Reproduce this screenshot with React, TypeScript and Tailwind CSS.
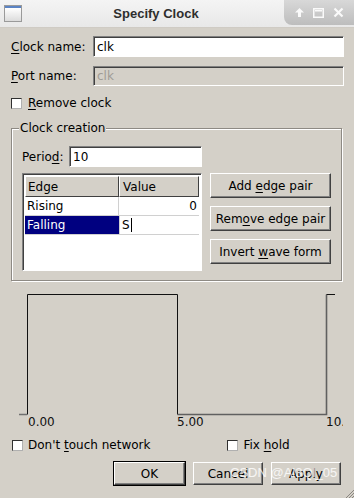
const raised =
  "border border-t-white border-l-white border-r-[#404040] border-b-[#404040] shadow-[inset_-1px_-1px_0_#808080]";
const sunken =
  "border border-t-[#808080] border-l-[#808080] border-r-white border-b-white shadow-[inset_1px_1px_0_#404040]";

function CheckBox() {
  return (
    <span className="inline-block w-[11px] h-[11px] bg-white border border-t-[#303030] border-l-[#303030] border-r-[#b0b0b0] border-b-[#b0b0b0]" />
  );
}

function Btn({
  children,
  w,
  def,
}: {
  children: React.ReactNode;
  w: string;
  def?: boolean;
}) {
  if (def) {
    return (
      <div className={`${w} h-[25px] border border-black flex`}>
        <button className={`flex-1 ${raised} bg-[#d4d0c8] text-[12px]`}>{children}</button>
      </div>
    );
  }
  return (
    <button className={`${w} h-[23px] ${raised} bg-[#d4d0c8] text-[12px] leading-none`}>
      {children}
    </button>
  );
}

export default function App() {
  return (
    <div className="relative w-[354px] h-[498px] overflow-hidden bg-[#d4d0c8] text-[12px] text-black font-['DejaVu_Sans',sans-serif]">
      {/* title bar */}
      <div className="flex h-[28px] bg-gradient-to-b from-[#f4f4f4] to-[#e8e8e8] border-b border-[#cfcbc4]">
        <div className="w-[28px] flex items-center pl-[4px]">
          <svg width="18" height="17" viewBox="0 0 18 17">
            <defs>
              <linearGradient id="g" x1="0" y1="0" x2="0" y2="1">
                <stop offset="0" stopColor="#ffffff" />
                <stop offset="1" stopColor="#dcdcdc" />
              </linearGradient>
            </defs>
            <rect x="0.5" y="0.5" width="17" height="16" fill="#f2f2f2" stroke="#9a9a9a" />
            <rect x="1" y="1" width="16" height="2" fill="#5b84c4" />
            <rect x="1" y="3" width="16" height="13" fill="url(#g)" />
          </svg>
        </div>
        <div className="flex-1 flex items-center justify-center font-['Liberation_Sans',sans-serif] font-bold text-[13px] text-[#2e2e2e]">
          Specify Clock
        </div>
        <div className="w-[70px] h-[25px] rounded-bl-[8px] bg-gradient-to-b from-[#d8d8d8] to-[#bdbdbd] flex items-center justify-around px-[6px]">
          <svg width="11" height="11" viewBox="0 0 11 11">
            <path d="M5.5 1 L10 5.5 H7 V10 H4 V5.5 H1 Z" fill="#fafafa" />
          </svg>
          <svg width="11" height="10" viewBox="0 0 11 10">
            <rect x="0.75" y="0.75" width="9.5" height="8.5" fill="none" stroke="#fafafa" strokeWidth="1.5" />
            <rect x="2" y="2" width="7" height="1.5" fill="#fafafa" />
          </svg>
          <svg width="11" height="11" viewBox="0 0 11 11">
            <path d="M1.5 1.5 L9.5 9.5 M9.5 1.5 L1.5 9.5" stroke="#fafafa" strokeWidth="2.2" />
          </svg>
        </div>
      </div>

      {/* name rows */}
      <div className="pl-[11px] pr-[10px]">
        <div className="mt-[8px] flex items-center h-[21px]">
          <span className="w-[82px]">
            <u className="underline-offset-2">C</u>lock name:
          </span>
          <div className={`flex-1 h-[21px] bg-white ${sunken} flex items-center pl-[3px]`}>clk</div>
        </div>
        <div className="mt-[9px] flex items-center h-[20px]">
          <span className="w-[82px]">
            <u className="underline-offset-2">P</u>ort name:
          </span>
          <div className={`flex-1 h-[20px] ${sunken} flex items-center pl-[3px] text-[#a09c96]`}>clk</div>
        </div>
        <div className="mt-[11px] flex items-center h-[12px] gap-[6px]">
          <CheckBox />
          <span>
            <u className="underline-offset-2">R</u>emove clock
          </span>
        </div>

        {/* group box */}
        <div className="relative mt-[19px] w-[331px] h-[153px] border border-[#8e8a84] shadow-[inset_1px_1px_0_#ffffff,1px_1px_0_#ffffff] pl-[10px] pt-[17px]">
          <span className="absolute left-[7px] top-[-8px] px-[1px] bg-[#d4d0c8] leading-[14px]">
            Clock creation
          </span>
          <div className="flex items-center h-[21px]">
            <span className="w-[47px]">
              Perio<u className="underline-offset-2">d</u>:
            </span>
            <div className={`w-[133px] h-[21px] bg-white ${sunken} flex items-center pl-[3px]`}>10</div>
          </div>
          <div className="mt-[6px] flex">
            <div className={`w-[180px] h-[98px] bg-white ${sunken} p-[2px] flex flex-col`}>
              <div className="flex h-[21px]">
                <div className="w-[94px] bg-[#d4d0c8] border border-t-white border-l-white border-r-[#404040] border-b-[#404040] flex items-center pl-[2px]">
                  Edge
                </div>
                <div className="flex-1 bg-[#d4d0c8] border border-t-white border-l-white border-r-[#404040] border-b-[#404040] flex items-center pl-[3px]">
                  Value
                </div>
              </div>
              <div className="flex h-[19px] border-b border-[#d0d0d0]">
                <div className="w-[94px] border-r border-[#d0d0d0] flex items-center pl-[2px]">Rising</div>
                <div className="flex-1 flex items-center justify-end pr-[2px]">0</div>
              </div>
              <div className="flex h-[19px] border-b border-[#d0d0d0]">
                <div className="w-[94px] bg-[#000080] text-white flex items-center pl-[2px]">Falling</div>
                <div className="flex-1 flex items-center pl-[2px] border-l border-[#d0d0d0]">
                  S<span className="inline-block w-[1px] h-[14px] bg-black ml-[1px]" />
                </div>
              </div>
            </div>
            <div className="ml-[8px] flex flex-col gap-[8px]">
              <Btn w="w-[121px] !h-[25px]">
                Add <u className="underline-offset-2">e</u>dge pair
              </Btn>
              <Btn w="w-[121px] !h-[25px]">
                Rem<u className="underline-offset-2">o</u>ve edge pair
              </Btn>
              <Btn w="w-[121px] !h-[25px]">
                Invert <u className="underline-offset-2">w</u>ave form
              </Btn>
            </div>
          </div>
        </div>
      </div>

      {/* wave canvas */}
      <div className="w-[343px] h-[150px] overflow-hidden">
        <svg width="343" height="150" viewBox="0 0 343 150" className="block">
          <path d="M19 133.5 H27" stroke="#707070" strokeWidth="1.5" fill="none" />
          <path d="M27.5 133.5 V13.5 H177.5 V133.5" stroke="#111" strokeWidth="1" fill="none" />
          <path d="M177.5 133.5 H326.5 V13.5" stroke="#606060" strokeWidth="1.6" fill="none" />
          <path d="M326.5 13.5 H335" stroke="#111" strokeWidth="1" fill="none" />
          <text x="28" y="145" fontSize="12" fontFamily="DejaVu Sans" fill="#111">0.00</text>
          <text x="177" y="145" fontSize="12" fontFamily="DejaVu Sans" fill="#111">5.00</text>
          <text x="326" y="145" fontSize="12" fontFamily="DejaVu Sans" fill="#111">10.00</text>
        </svg>
      </div>

      {/* bottom checkboxes */}
      <div className="mt-[8px] flex items-center h-[12px] pl-[12px]">
        <CheckBox />
        <span className="ml-[5px]">
          Don't <u className="underline-offset-2">t</u>ouch network
        </span>
        <span className="ml-[77px] flex">
          <CheckBox />
        </span>
        <span className="ml-[5px]">
          Fix <u className="underline-offset-2">h</u>old
        </span>
      </div>

      {/* dialog buttons */}
      <div className="mt-[10px] flex items-center pl-[113px]">
        <Btn w="w-[73px]" def>
          OK
        </Btn>
        <span className="ml-[7px] flex">
          <Btn w="w-[70px]">Cancel</Btn>
        </span>
        <span className="ml-[8px] flex">
          <Btn w="w-[70px]">Apply</Btn>
        </span>
      </div>

      {/* watermark */}
      <span className="absolute left-[230px] top-[466px] text-[13px] leading-none font-['Liberation_Sans',sans-serif] text-white/80">
        CSDN @Al3Ql_05
      </span>

      {/* resize grip */}
      <svg className="absolute right-0 bottom-0" width="10" height="10" viewBox="0 0 10 10">
        <path d="M10 2 L2 10 M10 5 L5 10 M10 8 L8 10" stroke="#8a8680" strokeWidth="1" />
      </svg>
    </div>
  );
}
